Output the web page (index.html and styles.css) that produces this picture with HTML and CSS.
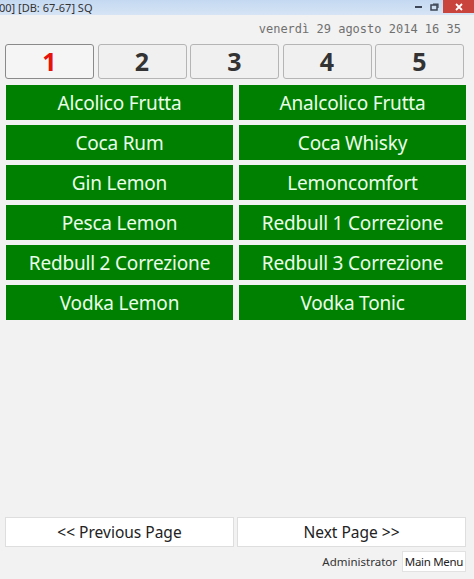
FILE: index.html
```html
<!DOCTYPE html>
<html lang="it">
<head>
    <meta charset="UTF-8">
    <title>Drinks</title>
    <link rel="stylesheet" href="styles.css">
</head>
<body>
    <div class="window">
        <div class="titlebar">
            <span class="title">00] [DB: 67-67] SQ</span>
            <div class="win-btn min">
                <svg width="8" height="3" viewBox="0 0 8 3"><rect x="0" y="0" width="7" height="2" fill="#3c4656"/></svg>
            </div>
            <div class="win-btn restore">
                <svg width="9" height="8" viewBox="0 0 9 8"><rect x="1" y="2" width="6" height="5" fill="none" stroke="#3c4656" stroke-width="1.5"/><path d="M3 1.2 H8 V5" fill="none" stroke="#3c4656" stroke-width="1.2"/></svg>
            </div>
            <div class="win-btn close">
                <svg width="8" height="8" viewBox="0 0 8 8"><path d="M1 1 L7 7 M7 1 L1 7" stroke="#fff" stroke-width="1.8"/></svg>
            </div>
        </div>
        <div class="date-row">venerdì 29 agosto 2014 16 35</div>
        <div class="tabs">
            <button class="tab active">1</button>
            <button class="tab">2</button>
            <button class="tab">3</button>
            <button class="tab">4</button>
            <button class="tab">5</button>
        </div>
        <div class="products">
            <button class="product">Alcolico Frutta</button>
            <button class="product">Analcolico Frutta</button>
            <button class="product">Coca Rum</button>
            <button class="product">Coca Whisky</button>
            <button class="product">Gin Lemon</button>
            <button class="product">Lemoncomfort</button>
            <button class="product">Pesca Lemon</button>
            <button class="product">Redbull 1 Correzione</button>
            <button class="product">Redbull 2 Correzione</button>
            <button class="product">Redbull 3 Correzione</button>
            <button class="product">Vodka Lemon</button>
            <button class="product">Vodka Tonic</button>
        </div>
        <div class="pager">
            <button class="page-btn">&lt;&lt; Previous Page</button>
            <button class="page-btn">Next Page &gt;&gt;</button>
        </div>
        <div class="status">
            <span class="user">Administrator</span>
            <button class="menu-btn">Main Menu</button>
        </div>
    </div>
</body>
</html>
```
FILE: styles.css
```css
body {
    margin: 0;
    padding: 0;
    background: #f2f2f2;
    font-family: "Noto Sans", "Open Sans", sans-serif;
}
.window {
    width: 474px;
    height: 579px;
    display: flex;
    flex-direction: column;
    overflow: hidden;
}
.titlebar {
    height: 15px;
    flex-shrink: 0;
    display: grid;
    grid-template-columns: 1fr 14px 17px 31px;
    align-items: start;
    background: linear-gradient(to bottom, #c4d9f1, #d6e4f5);
    font-size: 11px;
    color: #333;
}
.title {
    margin-left: -1px;
    line-height: 15px;
    overflow: hidden;
    white-space: nowrap;
}
.win-btn {
    display: flex;
    align-items: center;
    justify-content: center;
    height: 13px;
}
.min {
    align-items: flex-end;
    height: 9px;
}
.close {
    background: #c9443c;
}
.date-row {
    height: 29px;
    flex-shrink: 0;
    box-sizing: border-box;
    padding: 7px 13px 0 0;
    text-align: right;
    font-family: "DejaVu Sans Mono", monospace;
    font-size: 12px;
    color: #707070;
}
.tabs {
    display: grid;
    grid-template-columns: repeat(5, 1fr);
    gap: 3.5px;
    padding: 0 10px 0 5px;
}
.tab {
    height: 35px;
    padding: 0;
    background: #f0f0f0;
    border: 1px solid #b5b5b5;
    border-radius: 3px;
    font-family: "Noto Sans", sans-serif;
    font-size: 25px;
    font-weight: bold;
    color: #333;
    line-height: 1;
}
.tab.active {
    color: #e8120c;
    border-color: #8a8a8a;
    background: #f5f5f5;
}
.products {
    display: grid;
    grid-template-columns: 227px 227px;
    grid-auto-rows: 35px;
    column-gap: 6px;
    row-gap: 5px;
    padding: 6px 0 0 6px;
    flex: 1;
    align-content: start;
}
.product {
    background: #008000;
    border: none;
    color: #eaffea;
    font-family: "Noto Sans", sans-serif;
    font-size: 19px;
    letter-spacing: -0.2px;
    padding: 0;
}
.pager {
    display: grid;
    grid-template-columns: 229px 229px;
    column-gap: 3px;
    padding-left: 5px;
}
.page-btn {
    height: 30px;
    background: #fff;
    border: 1px solid #dedede;
    font-family: "Noto Sans", sans-serif;
    font-size: 15.5px;
    color: #222;
    padding: 0;
}
.status {
    display: flex;
    justify-content: flex-end;
    align-items: center;
    gap: 5px;
    padding: 4px 8px 7px 0;
}
.user {
    font-size: 11.5px;
    color: #333;
    white-space: nowrap;
}
.menu-btn {
    height: 21px;
    width: 64px;
    padding: 0;
    background: #fff;
    border: 1px solid #e2e2e2;
    font-family: "Noto Sans", sans-serif;
    font-size: 11.5px;
    letter-spacing: -0.3px;
    white-space: nowrap;
    color: #222;
}
```
